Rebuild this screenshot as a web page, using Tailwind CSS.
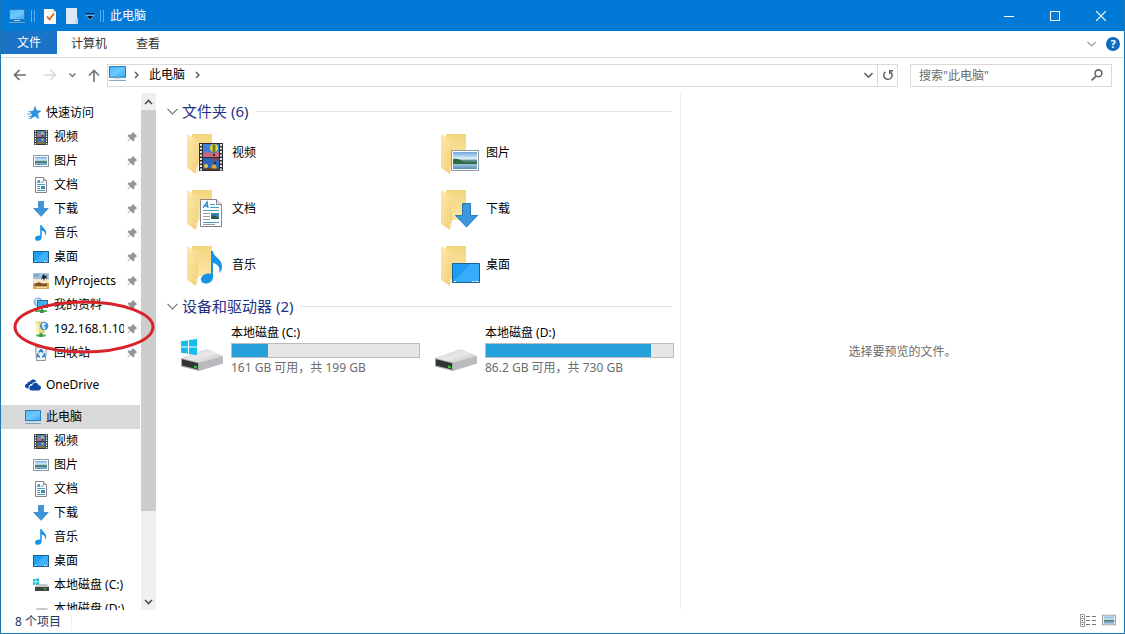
<!DOCTYPE html>
<html lang="zh-CN">
<head>
<meta charset="utf-8">
<title>此电脑</title>
<script src="https://cdn.jsdelivr.net/npm/@tailwindcss/browser@4"></script>
</head>
<body class="h-screen overflow-hidden bg-white font-['Noto_Sans','Noto_Sans_CJK_SC',sans-serif] text-xs text-black">
<svg class="absolute size-0" aria-hidden="true">
  <defs>
    <linearGradient id="gScreen" x1="0" y1="0" x2="1" y2="1"><stop offset="0" stop-color="#4db8f8"/><stop offset=".5" stop-color="#6cc9ff"/><stop offset="1" stop-color="#3aa8f0"/></linearGradient>
    <linearGradient id="gFold" x1="0" y1="0" x2="1" y2="1"><stop offset="0" stop-color="#fdeab0"/><stop offset="1" stop-color="#f3cf74"/></linearGradient>
    <linearGradient id="gBack" x1="0" y1="0" x2="0" y2="1"><stop offset="0" stop-color="#f5d67f"/><stop offset="1" stop-color="#fbe5a3"/></linearGradient>
    <linearGradient id="gSky" x1="0" y1="0" x2="0" y2="1"><stop offset="0" stop-color="#6aa6e0"/><stop offset=".4" stop-color="#e2f1fa"/><stop offset=".5" stop-color="#5f8f8c"/><stop offset=".68" stop-color="#3b6d66"/><stop offset=".74" stop-color="#9cc6dc"/><stop offset="1" stop-color="#4f8db8"/></linearGradient>
    <linearGradient id="gDisk" x1="0" y1="0" x2="1" y2="1"><stop offset="0" stop-color="#c9c9cb"/><stop offset=".5" stop-color="#e9e9ea"/><stop offset="1" stop-color="#bdbdc0"/></linearGradient>
  </defs>
  <symbol id="pc" viewBox="0 0 16 16"><rect x=".5" y="1.500" width="15" height="10" fill="url(#gScreen)" stroke="#2b7fb8"/><path d="M5 12h6v1H5z" fill="#b8cfdd"/><path d="M0 14.500h16" stroke="#7ca5c0"/></symbol>
  <symbol id="star" viewBox="0 0 16 16"><path d="M10 1.500l1.500 4.200 4.200.3-3.200 2.800 1.200 4.700-3.900-2.400-4 2.500 1.400-4.300L5 6.600l3.500-.6z" fill="#2b96e0" stroke="#1c7fc8" stroke-width=".6"/><path d="M3.500 6.500h3M2 9h4M3.500 11.500h3M4 13.500h2" stroke="#4aa9ea"/></symbol>
  <symbol id="video" viewBox="0 0 16 16"><path d="M1 1h14v15H1z" fill="#333"/><path d="M2.500 1.500v14M13.500 1.500v14" stroke="#eee" stroke-width="1.400" stroke-dasharray="1.400 1.100"/><path d="M4 2h8v6H4z" fill="#4f83c8"/><path d="M4 9h8v6H4z" fill="#3f6db8"/><path d="M4 6l3-1 2 3H4z" fill="#b3728e"/><circle cx="9.300" cy="4.300" r="1.500" fill="#d5b93c"/><path d="M8.500 6h2v1.500h-2z" fill="#5c4422"/><circle cx="9.500" cy="10.800" r="1.300" fill="#c8b040"/><path d="M4 13.500l4-.8 4 .8V15H4z" fill="#8a7a3a"/></symbol>
  <symbol id="pic" viewBox="0 0 16 16"><rect x=".5" y="2.500" width="15" height="11" fill="#fff" stroke="#8d979f"/><rect x="2" y="4" width="12" height="8" fill="url(#gSky)"/></symbol>
  <symbol id="doc" viewBox="0 0 16 16"><path d="M2.500.5h8l3 3v12h-11z" fill="#fff" stroke="#868686"/><path d="M10.500.5v3h3" fill="#ddd" stroke="#868686"/><path d="M4 6l2-3 1 3M4.500 5h2" fill="none" stroke="#2f7fae"/><path d="M8 5h3M4 7.500h8M4 9.500h3M4 11.500h3M4 13.500h8" stroke="#4aa0c8"/><path d="M8 9h4v3H8z" fill="#3f87a8"/></symbol>
  <symbol id="down" viewBox="0 0 16 16"><path d="M5.500.5h5v7h4.700L8 15.300.8 7.500h4.700z" fill="#3a96dd" stroke="#2a79b8" stroke-width=".7"/></symbol>
  <symbol id="music" viewBox="0 0 16 16"><path d="M7.200 0h1.400c.2 2.600 4.900 4 4.600 8-.1 1.200-.6 2-1.200 2.700.8-3-1-4.700-3.300-5.200v6.700c0 2-1.600 3.500-3.600 3.600-1.800.1-3.100-.9-3.100-2.300 0-1.700 1.900-3 3.900-3 .5 0 .9.100 1.300.2z" fill="#1495e8"/></symbol>
  <symbol id="desk" viewBox="0 0 16 16"><rect x=".5" y="2.500" width="15" height="11" fill="#1fa0f5" stroke="#17608f"/><path d="M1 13L11 3h4v10z" fill="#3bb0fb"/><path d="M2 12.500h1m8 0h1m1 0h1" stroke="#fff"/></symbol>
  <symbol id="proj" viewBox="0 0 16 16"><path d="M0 0h16v16H0z" fill="#a3c4da"/><path d="M0 6h16v4H0z" fill="#f2e6c8"/><path d="M0 10h16v6H0z" fill="#d6a95c"/><path d="M1 12q4-4 7-2t6 0v3H2z" fill="#7d5225"/><path d="M3 14h11v1H3z" fill="#f3d9a0"/><path d="M9 3l2-2 1 2 3-1-2 2 2 2-3-1-1 3-1-3-2 2 1-3z" fill="#223"/><path d="M1 1h5v3H1z" fill="#7fabc9"/></symbol>
  <symbol id="netpc" viewBox="0 0 16 16"><circle cx="5" cy="5" r="4.500" fill="#7db7dc"/><path d="M2 3q3-3 5 0T3 8z" fill="#d9eef9"/><rect x="4.500" y="3.500" width="10" height="7" fill="#3fb0ee" stroke="#2b6f9f"/><path d="M9 11v3" stroke="#4fa34a" stroke-width="2"/><path d="M2 14h12" stroke="#58b25b" stroke-width="2"/><path d="M7 13h4v3H7z" fill="#3d8f4c"/></symbol>
  <symbol id="netfold" viewBox="0 0 16 16"><path d="M3 1h8v11H5z" fill="#f4d878" stroke="#d8b44d" stroke-width=".6"/><path d="M3 1l3 2v10l-3-1z" fill="#fdeeb5"/><circle cx="11.200" cy="5" r="4.200" fill="#3c8fcb"/><path d="M9 2q3-1 4 1l-2 2 2 2-2 2q-1-2-2-3z" fill="#cfeaf5"/><path d="M8 12v2" stroke="#58a85a" stroke-width="2"/><path d="M3 14.500h10" stroke="#5cba5f" stroke-width="2"/><path d="M6 13h4v3H6z" fill="#3f9b4b"/></symbol>
  <symbol id="bin" viewBox="0 0 16 16"><path d="M2.500 1.500l1 14h9l1-14z" fill="#eef1f3" stroke="#8e979e"/><path d="M2 2h12" stroke="#a4adb3" stroke-width="2"/><path d="M8 4.500l2 3M8 4.500l-2 3M5 8.500l-.5 3H7M11 8.500l.7 3H9" fill="none" stroke="#2a7fcb" stroke-width="1.700"/></symbol>
  <symbol id="cloud" viewBox="0 0 16 16"><path d="M3.500 11.500C1 11.500 0 10.400 0 9s1-2.200 2.200-2.300C2.500 5 4 4.300 5.200 4.600 6.200 2.700 8 2.300 9.300 2.800c1 .3 1.700 1 2 1.900-2-.3-3.600.8-4.200 2.400C5 6.900 3.600 8.700 3.500 11.500z" fill="#1048a8"/><path d="M6.800 13.500C5 13.500 4.300 12.300 4.300 11s1-2.600 2.900-2.600c.6-2 2-2.900 3.600-2.700 1.500.2 2.600 1.200 2.800 2.600 1.500.1 2.400 1.200 2.400 2.500s-.9 2.700-2.600 2.700z" fill="#1048a8"/></symbol>
  <symbol id="disk" viewBox="0 0 16 16"><path d="M4 7h10l2 3H2z" fill="#c9c9cb"/><path d="M2 10h14v4H2z" fill="#3d4242"/><path d="M11 12h2" stroke="#5be06a"/></symbol>
  <symbol id="diskc" viewBox="0 0 16 16"><path d="M0 2h2.500v2.500H0zM3.200 1.600H6v2.900H3.200zM0 5.200h2.500v2.500H0zM3.200 5.200H6V8H3.200z" fill="#12bcd8"/><path d="M6 7h8l2 3H2l2-2z" fill="#c9c9cb"/><path d="M2 10h14v4H2z" fill="#3d4242"/><path d="M11 12h2" stroke="#5be06a"/></symbol>
  <symbol id="pin" viewBox="0 0 12 12"><path d="M7 1l4.200 4.200-1.200.5-1.700 1.600.1 2.200-1.200 1L4.700 8 .6 11.400 4 7.300 1.500 4.800l1-1.200 2.200.1L6.300 2z" fill="#8c969e"/></symbol>
  <symbol id="fold" viewBox="0 0 48 48"><path d="M11 4h20v30H11z" fill="url(#gBack)"/><path d="M6 4l10 6q1 .6 1 2v25l-2 .4v6.600L6 38z" fill="url(#gFold)"/><path d="M15 37.400l2-.4v3.500L15 44z" fill="#fbeec8"/></symbol>
  <symbol id="win" viewBox="0 0 16 16"><path d="M0 2.300l7-1v6.200H0zM8 1.100L16 0v7.500H8zM0 8.500h7v6.200l-7-1zM8 8.500h8V16l-8-1.100z" fill="#14bdea"/></symbol>
  <symbol id="drive" viewBox="0 0 42 22"><path d="M0 9L24 .6q2-.6 4 0L42 7 18 13.500z" fill="url(#gDisk)"/><path d="M0 9l18 4.500V22L0 17.500z" fill="#a7a8aa"/><path d="M18 13.500L42 7v7.500L18 22z" fill="#b9babd"/><path d="M1 10.300l16 4v6.300L1 16.600z" fill="#303436"/><path d="M13 16.500l3 .7v2.300l-3-.7z" fill="#30c73c"/></symbol>
</svg>

<div class="flex h-full flex-col border-x border-b border-[#1b78b8]">
  <header class="flex h-[31px] shrink-0 items-center bg-[#0079d7] pl-2 text-white">
    <svg class="size-4"><use href="#pc"/></svg>
    <svg class="ml-1.5 h-4 w-1" viewBox="0 0 4 16"><path d="M.5 2v12M3.500 2v12" stroke="#5fb0ee"/></svg>
    <button class="ml-[7px] size-4" aria-label="属性"><svg class="size-4" viewBox="0 0 16 16"><path d="M2 1h9l3 3v12H2z" fill="#fbf7f3"/><path d="M11 1v3h3" fill="#d5c9c0"/><path d="M5 8.500l2.500 3 4.500-6" fill="none" stroke="#dc5f26" stroke-width="1.700"/></svg></button>
    <button class="ml-1.5 size-4" aria-label="新建文件夹"><svg class="size-4" viewBox="0 0 16 16"><path d="M2 0h11v9l1 2v5H2z" fill="#dde9f7"/><path d="M11 11h3v5h-3z" fill="#bdd5ef"/></svg></button>
    <button class="ml-1 size-3" aria-label="自定义快速访问工具栏"><svg class="size-3" viewBox="0 0 12 12"><path d="M2 3.500h8" stroke="#06234a"/><path d="M2 5.500h8L6 10z" fill="#041833" stroke="#a8d2f5" stroke-width=".7"/></svg></button>
    <svg class="ml-1 h-4 w-1" viewBox="0 0 4 16"><path d="M.5 2v12M3.500 2v12" stroke="#5fb0ee"/></svg>
    <h1 class="ml-1.5">此电脑</h1>
    <div class="ml-auto flex h-full">
      <button class="grid w-[46px] place-items-center" aria-label="最小化"><svg class="size-[10px]" viewBox="0 0 10 10"><path d="M0 5.500h10" stroke="#fff"/></svg></button>
      <button class="grid w-[46px] place-items-center" aria-label="最大化"><svg class="size-[10px]" viewBox="0 0 10 10"><path d="M.5.5h9v9h-9z" fill="none" stroke="#fff"/></svg></button>
      <button class="grid w-[46px] place-items-center" aria-label="关闭"><svg class="size-[10px]" viewBox="0 0 10 10"><path d="M0 0l10 10M10 0L0 10" stroke="#fff" stroke-width="1.200"/></svg></button>
    </div>
  </header>

  <div class="flex h-[27px] shrink-0 items-start border-b border-[#dcdddf] text-[#333]">
    <button class="h-[23px] w-14 bg-[#1a73c7] text-white">文件</button>
    <button class="h-[25px] w-16">计算机</button>
    <button class="h-[25px] w-[54px]">查看</button>
    <div class="ml-auto flex h-[26px] items-center gap-2.5 pr-1">
      <button aria-label="展开功能区"><svg class="h-[10px] w-[9px]" viewBox="0 0 9 10"><path d="M.5 3l4 4 4-4" fill="none" stroke="#999" stroke-width="1.200"/></svg></button>
      <button class="size-[14px] rounded-full bg-[#0f6cbd] text-[11px] leading-[14px] font-bold text-white" aria-label="帮助">?</button>
    </div>
  </div>

  <div class="flex h-[34px] shrink-0 items-center pr-3">
    <div class="flex w-[106px] items-center pl-3">
      <button aria-label="后退"><svg class="h-3 w-[14px]" viewBox="0 0 14 12"><path d="M13 6H2M6.500 1l-5 5 5 5" fill="none" stroke="#6e6e6e" stroke-width="1.700"/></svg></button>
      <button class="ml-4" aria-label="前进"><svg class="h-3 w-[14px]" viewBox="0 0 14 12"><path d="M1 6h11M7.500 1l5 5-5 5" fill="none" stroke="#d9d9d9" stroke-width="1.600"/></svg></button>
      <button class="ml-3" aria-label="最近位置"><svg class="h-2 w-[7px]" viewBox="0 0 7 8"><path d="M.5 2.500l3 3 3-3" fill="none" stroke="#777" stroke-width="1.500"/></svg></button>
      <button class="ml-3" aria-label="向上"><svg class="h-[13px] w-3" viewBox="0 0 12 13"><path d="M6 13V2M1 6.500l5-5 5 5" fill="none" stroke="#777" stroke-width="1.700"/></svg></button>
    </div>
    <div class="flex h-[23px] flex-1 items-center border border-[#d9d9d9] pl-px">
      <svg class="mb-1 size-[17px]"><use href="#pc"/></svg>
      <svg class="ml-2 h-2 w-[5px]" viewBox="0 0 5 8"><path d="M1 1l3 3-3 3" fill="none" stroke="#555" stroke-width="1.300"/></svg>
      <button class="ml-2.5 leading-5">此电脑</button>
      <svg class="ml-2.5 h-2 w-[5px]" viewBox="0 0 5 8"><path d="M1 1l3 3-3 3" fill="none" stroke="#555" stroke-width="1.300"/></svg>
      <button class="ml-auto grid h-full w-[18px] place-items-center" aria-label="以前的位置"><svg class="h-[10px] w-[9px]" viewBox="0 0 9 10"><path d="M.5 3l4 4 4-4" fill="none" stroke="#666" stroke-width="1.700"/></svg></button>
      <button class="grid h-full w-5 place-items-center border-l border-[#d9d9d9]" aria-label="刷新"><svg class="size-3" viewBox="0 0 12 12"><path d="M3.300 2.900A4.200 4.200 0 1 0 8.300 2.700" fill="none" stroke="#666" stroke-width="1.500"/><path d="M11 1.700H7.700V5.200" fill="none" stroke="#666" stroke-width="1.500"/></svg></button>
    </div>
    <form class="ml-3 flex h-[23px] w-[202px] items-center border border-[#d9d9d9] pr-2 pl-2">
      <input class="h-5 min-w-0 flex-1 outline-none placeholder:text-[#6d6d6d]" type="text" aria-label="搜索" placeholder='搜索"此电脑"'>
      <button type="button" aria-label="搜索"><svg class="size-3" viewBox="0 0 12 12"><circle cx="7.500" cy="4.300" r="3.400" fill="none" stroke="#666" stroke-width="1.600"/><path d="M5.200 6.800L.7 11.300" stroke="#666" stroke-width="1.800"/></svg></button>
    </form>
  </div>

  <div class="flex min-h-0 flex-1 pt-px">
    <nav class="w-[139px] shrink-0 overflow-hidden pt-2" aria-label="导航窗格"><ul id="tree"></ul></nav>
    <div class="ml-px flex w-[15px] shrink-0 flex-col bg-[#f0f0f0]">
      <button class="grid h-[17px] shrink-0 place-items-center" aria-label="向上滚动"><svg class="h-[6px] w-[9px]" viewBox="0 0 9 6"><path d="M1 5l3.500-3.500L8 5" fill="none" stroke="#505050" stroke-width="1.700"/></svg></button>
      <div class="min-h-0 flex-1"><div class="h-[83%] bg-[#cdcdcd]"></div></div>
      <button class="grid h-[17px] shrink-0 place-items-center" aria-label="向下滚动"><svg class="h-[6px] w-[9px]" viewBox="0 0 9 6"><path d="M1 1l3.500 3.500L8 1" fill="none" stroke="#505050" stroke-width="1.700"/></svg></button>
    </div>
    <div class="grid min-w-0 flex-1 grid-cols-[525fr_443fr]">
      <main class="min-w-0 border-r border-[#f0f0f0] pt-1.5 pr-2 pl-[11px]">
        <section>
          <h2 class="flex h-6 items-center text-[15px] text-[#1e3287]">
            <svg class="mr-1 h-[7px] w-[11px]" viewBox="0 0 11 7"><path d="M.5.800l5 5 5-5" fill="none" stroke="#777" stroke-width="1.200"/></svg>文件夹 (6)
            <span class="ml-2 h-px flex-1 bg-[#e2e2e2]"></span>
          </h2>
          <ul id="folders" class="grid grid-cols-[254px_minmax(0,1fr)] pt-0.5 pl-[14px]"></ul>
        </section>
        <section class="mt-px">
          <h2 class="flex h-6 items-center text-[15px] text-[#1e3287]">
            <svg class="mr-1 h-[7px] w-[11px]" viewBox="0 0 11 7"><path d="M.5.800l5 5 5-5" fill="none" stroke="#777" stroke-width="1.200"/></svg>设备和驱动器 (2)
            <span class="ml-2 h-px flex-1 bg-[#e2e2e2]"></span>
          </h2>
          <ul id="drives" class="grid grid-cols-[254px_minmax(0,1fr)] pt-1.5 pl-[14px]"></ul>
        </section>
      </main>
      <aside class="grid place-items-center text-[#6d6d6d]"><p>选择要预览的文件。</p></aside>
    </div>
  </div>

  <footer class="flex h-[23px] shrink-0 items-center pr-2 pl-3.5 text-[#1e395b]">
    <span>8 个项目</span><span class="ml-2.5 h-4 w-px bg-[#f0f0f0]"></span>
    <div class="ml-auto flex items-center gap-1.5 pb-1">
      <button aria-label="详细信息"><svg class="h-[14px] w-4" viewBox="0 0 16 14"><path d="M.5 1.500h4v4h-4zM.5 5.500h4v4h-4zM.5 9.500h4v4h-4z" fill="#fff" stroke="#999"/><path d="M2 3.500h1M2 7.500h1M2 11.500h1" stroke="#333"/><path d="M6 3.500h4m2 0h4M6 7.500h4m2 0h4M6 11.500h4m2 0h4" stroke="#777"/></svg></button>
      <button aria-label="大缩略图"><svg class="size-[14px]"><use href="#pic"/></svg></button>
    </div>
  </footer>
</div>

<svg class="pointer-events-none absolute top-[300px] left-[13px] h-[54px] w-[142px]" viewBox="0 0 142 54"><ellipse cx="71" cy="27" rx="69" ry="25" fill="none" stroke="#d8232a" stroke-width="3"/></svg>

<script>
const tree = [
  ['star', '快速访问', 'root'], ['video', '视频', 'pin'], ['pic', '图片', 'pin'], ['doc', '文档', 'pin'], ['down', '下载', 'pin'],
  ['music', '音乐', 'pin'], ['desk', '桌面', 'pin'], ['proj', 'MyProjects', 'pin'], ['netpc', '我的资料', 'pin'],
  ['netfold', '192.168.1.100', 'pin'], ['bin', '回收站', 'pin'],
  ['cloud', 'OneDrive', 'root gap'], ['pc', '此电脑', 'root gap active'],
  ['video', '视频', ''], ['pic', '图片', ''], ['doc', '文档', ''], ['down', '下载', ''], ['music', '音乐', ''], ['desk', '桌面', ''],
  ['diskc', '本地磁盘 (C:)', ''], ['disk', '本地磁盘 (D:)', '']
];
document.getElementById('tree').innerHTML = tree.map(([icon, name, kind]) => `
  <li class="${kind.includes('gap') ? 'mt-2' : ''}">
    <a href="#" class="flex h-6 items-center pr-0.5 ${kind.includes('root') ? 'pl-6' : 'pl-8'} ${kind.includes('active') ? 'bg-[#d9d9d9]' : ''}">
      <svg class="mr-[5px] size-4 shrink-0"><use href="#${icon}"/></svg>
      <span class="${kind === 'pin' ? 'w-[70px] shrink-0 overflow-hidden' : ''} whitespace-nowrap">${name}</span>
      ${kind === 'pin' ? '<svg class="ml-auto size-3 shrink-0"><use href="#pin"/></svg>' : ''}
    </a>
  </li>`).join('');

const badges = {
  video: '<path d="M18 13h24v28H18z" fill="#2c2c2e"/><path d="M20 14v27M40 14v27" stroke="#e9e9e9" stroke-width="2" stroke-dasharray="2 1.500"/><path d="M22 14h16v13H22z" fill="#3f7fd8"/><path d="M22 28h16v12H22z" fill="#2f62bd"/><path d="M22 24l4-3 3 2 9-1v5H22z" fill="#c96a80"/><ellipse cx="33" cy="18" rx="4" ry="4" fill="#e9d23c"/><path d="M31.500 14.500v7l1.500 2 1.500-2v-7z" fill="#67852a"/><path d="M32 24h2v2h-2z" fill="#3a2a18"/><path d="M31 28h6l-2 3h-2z" fill="#a53a2c"/><path d="M33 32h2v2h-2z" fill="#3a2a18"/><circle cx="25" cy="36" r="2" fill="#e8cc3c"/><circle cx="33" cy="37" r="2.500" fill="#d9a933"/><path d="M22 39l6-1 10 1v1H22z" fill="#5e421c"/>',
  pic: '<path d="M16.500 20.500h27v20h-27z" fill="#fff" stroke="#8f999f"/><path d="M18 22h24v17H18z" fill="url(#gSky)"/><path d="M18 29q5-1 9 2t15 1v2H18z" fill="#2f6b43"/>',
  doc: '<path d="M19.500 13.500h16l5 5v22h-21z" fill="#fff" stroke="#858585"/><path d="M35.500 13.500v5h5" fill="#e5e5e5" stroke="#858585"/><path d="M22 22l4-6 1 6M23 20h4" fill="none" stroke="#1f8ac4" stroke-width="1.300"/><path d="M29 18.500h5M29 21.500h9M22 24.500h16M22 36.500h16" stroke="#42a2d8"/><path d="M22 27.500h7M22 30.500h7M22 33.500h7M22 38.500h12" stroke="#999"/><path d="M30 27h8v6h-8z" fill="#3585b8"/><path d="M30 31l3-2 5 3v1h-8z" fill="#31553f"/>',
  down: '<path d="M27.500 17.500h8v12h7L31.500 41 20.500 29.500h7z" fill="#3a96dd" stroke="#2a79b8"/>',
  music: '<path d="M30 9h2c.3 6 9.500 8 9 16-.1 3-1.500 5-3 6 2-6-2-9-6-10v14c0 4-3.500 6.500-7 6.500-3 0-5-1.500-5-4 0-3.500 3.700-6 7.500-6 1 0 1.700.1 2.500.4z" fill="#1495e8"/>',
  desk: '<path d="M17.500 21.500h27v19h-27z" fill="#1e9df5" stroke="#1a6494"/><path d="M18 40l17-18h9v18z" fill="#37acfb"/><path d="M19 39.500h2m16 0h1m1 0h1m1 0h2" stroke="#fff"/>'
};
const folders = [['video', '视频'], ['pic', '图片'], ['doc', '文档'], ['down', '下载'], ['music', '音乐'], ['desk', '桌面']];
document.getElementById('folders').innerHTML = folders.map(([icon, name]) => `
  <li><a href="#" class="flex h-14 items-center gap-[3px]">
    <svg class="mt-0.5 size-12" viewBox="0 0 48 48"><use href="#fold"/>${badges[icon]}</svg><span>${name}</span>
  </a></li>`).join('');

const drives = [['本地磁盘 (C:)', '161 GB 可用，共 199 GB', 19, true], ['本地磁盘 (D:)', '86.2 GB 可用，共 730 GB', 88, false]];
document.getElementById('drives').innerHTML = drives.map(([name, info, used, system]) => `
  <li><a href="#" class="flex gap-2">
    <svg class="mt-3 h-9 w-[42px] shrink-0" viewBox="0 0 42 36"><use href="#drive" y="13" width="42" height="22"/>${system ? '<use href="#win" y="3" width="16" height="16"/>' : ''}</svg>
    <span class="flex w-[189px] shrink-0 flex-col">
      <span class="leading-[18px]">${name}</span>
      <span class="mt-px flex h-[15px] border border-[#bcbcbc] bg-[#e6e6e6]" role="meter" aria-label="${name}" aria-valuenow="${used}"><span class="bg-[#26a0da]" style="width:${used}%"></span></span>
      <span class="leading-5 whitespace-nowrap text-[#6d6d6d]">${info}</span>
    </span>
  </a></li>`).join('');
</script>
</body>
</html>
